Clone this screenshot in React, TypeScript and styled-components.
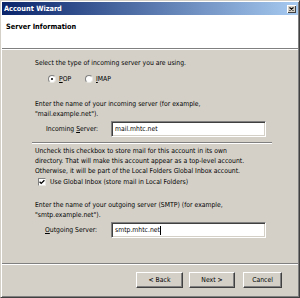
import React from "react";
import styled, { createGlobalStyle } from "styled-components";

const GlobalStyle = createGlobalStyle`
  html, body { margin: 0; padding: 0; background: #d4d0c8; }
  body { font-family: "DejaVu Sans Condensed", "Liberation Sans", Arial, sans-serif; }
  * { box-sizing: border-box; }
`;

const Window = styled.div`
  width: 300px;
  height: 298px;
  background: #d4d0c8;
  border: 1px solid;
  border-color: #d4d0c8 #404040 #404040 #d4d0c8;
  box-shadow: inset 1px 1px #ffffff, inset -1px -1px #808080;
  padding: 1px;
  display: flex;
  flex-direction: column;
  overflow: hidden;
`;

const TitleBar = styled.div`
  height: 13px;
  flex: none;
  display: flex;
  align-items: center;
  justify-content: space-between;
  padding: 0 2px 0 2px;
  background: linear-gradient(to right, #0a246a, #a6caf0);
`;

const TitleText = styled.span`
  color: #ffffff;
  font-weight: bold;
  font-size: 7.3px;
  line-height: 13px;
`;

const CloseButton = styled.div`
  width: 9px;
  height: 8px;
  background: #d4d0c8;
  box-shadow: inset 1px 1px #ffffff, inset -1px -1px #404040;
  display: flex;
  align-items: center;
  justify-content: center;
`;

const Header = styled.div`
  height: 33px;
  flex: none;
  background: #ffffff;
  padding: 7px 0 0 4px;
`;

const HeaderTitle = styled.div`
  font-weight: bold;
  font-size: 7.3px;
  line-height: 10px;
  color: #000;
`;

const Separator = styled.div<{ $mt?: number }>`
  flex: none;
  height: 2px;
  border-top: 1px solid #808080;
  border-bottom: 1px solid #ffffff;
  margin-top: ${(p) => p.$mt ?? 0}px;
`;

const Body = styled.div`
  flex: 1;
  padding: 0 26px 0 30px;
  display: flex;
  flex-direction: column;
`;

const Text = styled.div<{ $mt: number }>`
  font-size: 6.8px;
  line-height: 10px;
  color: #000;
  padding-left: 3px;
  margin-top: ${(p) => p.$mt}px;
  white-space: nowrap;
`;

const RadioRow = styled.div`
  margin-top: 6px;
  height: 9px;
  padding-left: 16px;
  display: flex;
  align-items: center;
  font-size: 6.8px;
  color: #000;
`;

const RadioOption = styled.label<{ $w: number }>`
  display: flex;
  align-items: center;
  gap: 3px;
  width: ${(p) => p.$w}px;
`;

const RadioCircle = styled.span<{ $checked?: boolean }>`
  width: 8px;
  height: 8px;
  border-radius: 50%;
  background: #ffffff;
  border: 1px solid;
  border-color: #808080 #e8e6e0 #e8e6e0 #808080;
  display: flex;
  align-items: center;
  justify-content: center;
  &::after {
    content: "";
    width: 2px;
    height: 2px;
    border-radius: 50%;
    background: ${(p) => (p.$checked ? "#000" : "transparent")};
  }
`;

const U = styled.span`
  text-decoration: underline;
`;

const FieldRow = styled.div<{ $mt: number; $pl: number }>`
  margin-top: ${(p) => p.$mt}px;
  padding-left: ${(p) => p.$pl}px;
  display: flex;
  align-items: center;
  height: 16px;
`;

const FieldLabel = styled.span<{ $w: number }>`
  width: ${(p) => p.$w}px;
  font-size: 6.8px;
  color: #000;
`;

const Input = styled.div`
  width: 155px;
  height: 16px;
  background: #ffffff;
  border: 1px solid;
  border-color: #808080 #ffffff #ffffff #808080;
  box-shadow: inset 1px 1px #404040, inset -1px -1px #d4d0c8;
  font-size: 6.8px;
  line-height: 14px;
  padding-left: 3px;
  color: #000;
  display: flex;
  align-items: center;
`;

const Caret = styled.span`
  display: inline-block;
  width: 1px;
  height: 9px;
  background: #000;
  margin-left: 0.5px;
`;

const CheckRow = styled.div`
  margin-top: 2px;
  height: 8px;
  padding-left: 6px;
  display: flex;
  align-items: center;
  gap: 4px;
  font-size: 6.8px;
  color: #000;
  white-space: nowrap;
`;

const CheckBox = styled.span`
  width: 8px;
  height: 8px;
  flex: none;
  background: #ffffff;
  border: 1px solid;
  border-color: #808080 #e8e6e0 #e8e6e0 #808080;
  display: flex;
  align-items: center;
  justify-content: center;
`;

const Footer = styled.div`
  flex: none;
  display: flex;
  flex-direction: column;
`;

const ButtonRow = styled.div`
  display: flex;
  justify-content: flex-end;
  padding: 7px 16px 8px 0;
`;

const Button = styled.div<{ $w: number; $ml: number }>`
  width: ${(p) => p.$w}px;
  height: 16px;
  margin-left: ${(p) => p.$ml}px;
  background: #d4d0c8;
  border: 1px solid;
  border-color: #ffffff #404040 #404040 #ffffff;
  box-shadow: inset -1px -1px #808080;
  font-size: 6.8px;
  color: #000;
  display: flex;
  align-items: center;
  justify-content: center;
`;

export default function App() {
  return (
    <>
      <GlobalStyle />
      <Window>
        <TitleBar>
          <TitleText>Account Wizard</TitleText>
          <CloseButton>
            <svg width="5" height="4" viewBox="0 0 5 4">
              <path d="M0.5 0.5 L4.5 3.5 M4.5 0.5 L0.5 3.5" stroke="#000" strokeWidth="1.1" />
            </svg>
          </CloseButton>
        </TitleBar>
        <Header>
          <HeaderTitle>Server Information</HeaderTitle>
        </Header>
        <Separator />
        <Body>
          <Text $mt={8}>Select the type of incoming server you are using.</Text>
          <RadioRow>
            <RadioOption $w={37}>
              <RadioCircle $checked />
              <span>
                <U>P</U>OP
              </span>
            </RadioOption>
            <RadioOption $w={40}>
              <RadioCircle />
              <span>
                <U>I</U>MAP
              </span>
            </RadioOption>
          </RadioRow>
          <Text $mt={16}>
            Enter the name of your incoming server (for example,
            <br />
            "mail.example.net").
          </Text>
          <FieldRow $mt={2} $pl={14}>
            <FieldLabel $w={65}>
              Incoming <U>S</U>erver:
            </FieldLabel>
            <Input>mail.mhtc.net</Input>
          </FieldRow>
          <Separator $mt={5} />
          <Text $mt={2}>
            Uncheck this checkbox to store mail for this account in its own
            <br />
            directory. That will make this account appear as a top-level account.
            <br />
            Otherwise, it will be part of the Local Folders Global Inbox account.
          </Text>
          <CheckRow>
            <CheckBox>
              <svg width="6" height="6" viewBox="0 0 6 6">
                <path d="M0.6 2.8 L2.2 4.4 L5.4 1.2" stroke="#000" strokeWidth="1.3" fill="none" />
              </svg>
            </CheckBox>
            <span>Use Global Inbox (store mail in Local Folders)</span>
          </CheckRow>
          <Text $mt={14}>
            Enter the name of your outgoing server (SMTP) (for example,
            <br />
            "smtp.example.net").
          </Text>
          <FieldRow $mt={2} $pl={13}>
            <FieldLabel $w={66}>
              <U>O</U>utgoing Server:
            </FieldLabel>
            <Input>
              smtp.mhtc.net
              <Caret />
            </Input>
          </FieldRow>
        </Body>
        <Footer>
          <Separator />
          <ButtonRow>
            <Button $w={47} $ml={0}>&lt; Back</Button>
            <Button $w={46} $ml={6}>Next &gt;</Button>
            <Button $w={39} $ml={8}>Cancel</Button>
          </ButtonRow>
        </Footer>
      </Window>
    </>
  );
}
